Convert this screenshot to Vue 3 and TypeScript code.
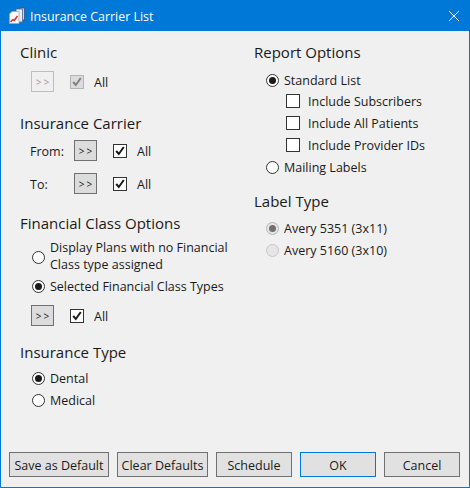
<script setup lang="ts">
const footer = [
  { label: 'Save as Default', width: 100, primary: false },
  { label: 'Clear Defaults', width: 91, primary: false },
  { label: 'Schedule', width: 76, primary: false },
  { label: 'OK', width: 76, primary: true },
  { label: 'Cancel', width: 76, primary: false },
]
const subOptions = ['Include Subscribers', 'Include All Patients', 'Include Provider IDs']
</script>

<template>
  <div class="window">
    <header class="titlebar">
      <svg class="app-icon" width="18" height="18" viewBox="0 0 18 18">
        <rect x="12" y="1" width="4.5" height="12" fill="#c9d6ea" stroke="#33507f" stroke-width="0.8" />
        <rect x="8" y="2" width="6.5" height="13" fill="#e8eef7" stroke="#4a6490" stroke-width="0.8" />
        <path d="M1.5 7 L4 4.5 H11 V16.5 H1.5 Z" fill="#fff" stroke="#9aa6bb" stroke-width="0.8" />
        <path d="M2.5 15 L5 12.5 L6.2 13.5 L9.5 9" fill="none" stroke="#e02a2a" stroke-width="1.5" />
      </svg>
      <span class="title">Insurance Carrier List</span>
      <svg class="close" width="10" height="10" viewBox="0 0 10 10">
        <path d="M0 0 L10 10 M10 0 L0 10" stroke="#fff" stroke-width="1" />
      </svg>
    </header>

    <main class="content">
      <div class="columns">
        <div class="left">
          <h2 class="heading">Clinic</h2>
          <div class="row clinic-row">
            <button class="more disabled">&gt;&gt;</button>
            <span class="check disabled-check">
              <svg width="12" height="12" viewBox="0 0 12 12"><path d="M2.2 6 L4.8 9 L9.8 2" fill="none" stroke="#808080" stroke-width="2" /></svg>
            </span>
            <span class="text">All</span>
          </div>

          <h2 class="heading carrier-heading">Insurance Carrier</h2>
          <div class="row from-row">
            <span class="text range-label">From:</span>
            <button class="more">&gt;&gt;</button>
            <span class="check">
              <svg width="12" height="12" viewBox="0 0 12 12"><path d="M2.2 6 L4.8 9 L9.8 2" fill="none" stroke="#1a1a1a" stroke-width="2" /></svg>
            </span>
            <span class="text">All</span>
          </div>
          <div class="row to-row">
            <span class="text range-label">To:</span>
            <button class="more">&gt;&gt;</button>
            <span class="check">
              <svg width="12" height="12" viewBox="0 0 12 12"><path d="M2.2 6 L4.8 9 L9.8 2" fill="none" stroke="#1a1a1a" stroke-width="2" /></svg>
            </span>
            <span class="text">All</span>
          </div>

          <h2 class="heading financial-heading">Financial Class Options</h2>
          <div class="radio-row wrap-row">
            <span class="radio"></span>
            <span class="text two-line">Display Plans with no Financial<br />Class type assigned</span>
          </div>
          <div class="radio-row selected-row">
            <span class="radio on"></span>
            <span class="text">Selected Financial Class Types</span>
          </div>
          <div class="row financial-all">
            <button class="more">&gt;&gt;</button>
            <span class="check">
              <svg width="12" height="12" viewBox="0 0 12 12"><path d="M2.2 6 L4.8 9 L9.8 2" fill="none" stroke="#1a1a1a" stroke-width="2" /></svg>
            </span>
            <span class="text">All</span>
          </div>

          <h2 class="heading type-heading">Insurance Type</h2>
          <div class="radio-row dental-row">
            <span class="radio on"></span>
            <span class="text">Dental</span>
          </div>
          <div class="radio-row medical-row">
            <span class="radio"></span>
            <span class="text">Medical</span>
          </div>
        </div>

        <div class="right">
          <h2 class="heading">Report Options</h2>
          <div class="radio-row standard-row">
            <span class="radio on"></span>
            <span class="text">Standard List</span>
          </div>
          <div v-for="option in subOptions" :key="option" class="sub-row">
            <span class="check blank"></span>
            <span class="text">{{ option }}</span>
          </div>
          <div class="radio-row">
            <span class="radio"></span>
            <span class="text">Mailing Labels</span>
          </div>

          <h2 class="heading label-heading">Label Type</h2>
          <div class="radio-row avery-first">
            <span class="radio on radio-disabled"></span>
            <span class="text">Avery 5351 (3x11)</span>
          </div>
          <div class="radio-row">
            <span class="radio radio-disabled-off"></span>
            <span class="text">Avery 5160 (3x10)</span>
          </div>
        </div>
      </div>

      <footer class="footer">
        <button
          v-for="item in footer"
          :key="item.label"
          class="action"
          :class="{ primary: item.primary }"
          :style="{ width: item.width + 'px' }"
        >{{ item.label }}</button>
      </footer>
    </main>
  </div>
</template>

<style>
html, body { margin: 0; padding: 0; background: #f0f0f0; }
</style>

<style scoped>
.window {
  width: 470px;
  height: 488px;
  box-sizing: border-box;
  border: 1px solid #0078d7;
  display: flex;
  flex-direction: column;
  background: #f0f0f0;
  color: #1a1a1a;
  font-family: "Open Sans", "Noto Sans", sans-serif;
  font-size: 12.5px;
  overflow: hidden;
}
.titlebar {
  height: 30px;
  flex: none;
  background: #0078d7;
  display: flex;
  align-items: center;
  padding: 0 10px 0 7px;
  color: #fff;
}
.app-icon { flex: none; }
.title { margin-left: 4px; font-size: 12.4px; }
.close { margin-left: auto; margin-bottom: 1px; }
.content {
  flex: 1;
  display: flex;
  flex-direction: column;
  padding: 0 8px 10px;
  min-height: 0;
}
.columns { flex: 1; display: flex; min-height: 0; }
.left { width: 245px; padding-left: 11px; box-sizing: border-box; }
.right { flex: 1; }
.heading {
  margin: 0;
  font-size: 15px;
  font-weight: 400;
  line-height: 18px;
  height: 20px;
}
.left > .heading:first-child,
.right > .heading:first-child { margin-top: 12px; }
.text { line-height: 16px; white-space: nowrap; }
.row { display: flex; align-items: center; height: 21px; }
.row .text { padding-top: 3px; }
.clinic-row { margin-top: 8px; padding-left: 11px; }
.carrier-heading { margin-top: 22px; }
.from-row { margin-top: 6px; padding-left: 10px; }
.to-row { margin-top: 12px; padding-left: 10px; }
.range-label { width: 44px; flex: none; }
.financial-heading { margin-top: 20px; }
.wrap-row { margin-top: 5px; align-items: flex-start; }
.radio-row .text, .sub-row .text { padding-top: 2px; }
.radio-row .two-line { line-height: 17px; padding-top: 0; }
.selected-row { margin-top: 5px; }
.financial-all { margin-top: 11px; padding-left: 11px; }
.type-heading { margin-top: 17px; }
.dental-row { margin-top: 7px; }
.medical-row { margin-top: 6px; }
.more {
  width: 23px;
  height: 21px;
  box-sizing: border-box;
  flex: none;
  padding: 0 0 0 2px;
  border: 1px solid #707070;
  background: #dcdcdc;
  color: #1a1a1a;
  font: inherit;
  font-size: 10px;
  letter-spacing: 2px;
}
.more.disabled {
  border-color: #bdbdbd;
  background: #f0f0f0;
  color: #9a9a9a;
}
.check {
  width: 14px;
  height: 14px;
  box-sizing: border-box;
  flex: none;
  border: 1px solid #333;
  background: #fff;
  display: flex;
  align-items: center;
  justify-content: center;
  margin: 0 10px 0 16px;
}
.check.blank { border-color: #333; margin: 0 8px 0 0; }
.disabled-check { border-color: #b5b5b5; background: #dcdcdc; }
.radio-row { display: flex; align-items: center; padding-left: 12px; height: 16px; }
.wrap-row { height: 34px; }
.radio {
  width: 13px;
  height: 13px;
  box-sizing: border-box;
  flex: none;
  border: 1px solid #333;
  border-radius: 50%;
  background: #fff;
  margin-right: 5px;
  display: flex;
  align-items: center;
  justify-content: center;
}
.wrap-row .radio { margin-top: 3px; }
.radio.on::after {
  content: "";
  width: 7px;
  height: 7px;
  border-radius: 50%;
  background: #1a1a1a;
}
.radio-disabled { border-color: #b5b5b5; background: #e6e6e6; }
.radio.radio-disabled::after { background: #707070; }
.radio-disabled-off { border-color: #c6c6c6; background: #e6e6e6; }
.standard-row { margin-top: 9px; }
.sub-row {
  display: flex;
  align-items: center;
  height: 22px;
  padding-left: 32px;
}
.standard-row + .sub-row { margin-top: 2px; }
.sub-row + .radio-row { margin-top: 3px; }
.label-heading { margin-top: 17px; }
.avery-first { margin-top: 8px; margin-bottom: 6px; }
.footer {
  flex: none;
  display: flex;
  gap: 8px;
}
.action {
  height: 25px;
  box-sizing: border-box;
  padding: 2px 0 0;
  border: 1px solid #707070;
  background: #e1e1e1;
  color: #1a1a1a;
  font: inherit;
  white-space: nowrap;
}
.action.primary { border-color: #0078d7; }
</style>
